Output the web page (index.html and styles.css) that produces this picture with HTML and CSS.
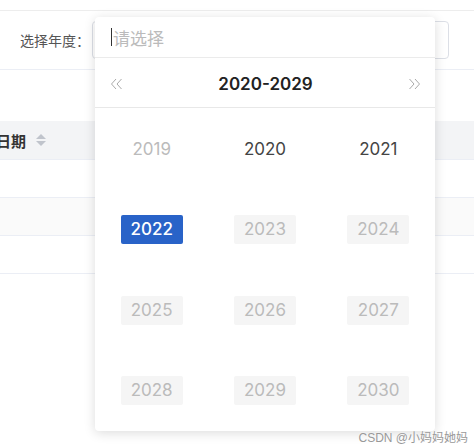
FILE: index.html
```html
<!DOCTYPE html>
<html lang="zh-CN">
<head>
    <meta charset="UTF-8">
    <title>选择年度</title>
    <link rel="stylesheet" href="styles.css">
</head>
<body>
<div id="page">
    <div class="search">
        <label class="search-label">选择年度：</label>
        <div class="search-input"></div>
    </div>

    <div class="table">
        <div class="row head">
            <div class="cell">日期 <span class="sort"><i class="up"></i><i class="down"></i></span></div>
        </div>
        <div class="row"><div class="cell"></div></div>
        <div class="row stripe"><div class="cell"></div></div>
        <div class="row"><div class="cell"></div></div>
    </div>

    <!-- year picker dropdown -->
    <div id="picker">
        <div class="picker-input"><span class="caret"></span><span class="placeholder">请选择</span></div>
        <div class="picker-head">
            <svg class="arrow" width="13" height="12" viewBox="0 0 13 12"><path d="M6 1L1.5 6L6 11M11.5 1L7 6L11.5 11" fill="none" stroke="#aaa" stroke-width="1"/></svg>
            <span class="decade">2020-2029</span>
            <svg class="arrow" width="13" height="12" viewBox="0 0 13 12"><path d="M1.5 1L6 6L1.5 11M7 1L11.5 6L7 11" fill="none" stroke="#aaa" stroke-width="1"/></svg>
        </div>
        <div class="years">
            <div class="year"><span class="out">2019</span></div>
            <div class="year"><span class="on">2020</span></div>
            <div class="year"><span class="on">2021</span></div>
            <div class="year"><span class="sel">2022</span></div>
            <div class="year"><span class="dis">2023</span></div>
            <div class="year"><span class="dis">2024</span></div>
            <div class="year"><span class="dis">2025</span></div>
            <div class="year"><span class="dis">2026</span></div>
            <div class="year"><span class="dis">2027</span></div>
            <div class="year"><span class="dis">2028</span></div>
            <div class="year"><span class="dis">2029</span></div>
            <div class="year"><span class="dis">2030</span></div>
        </div>
    </div>

    <div id="mark">CSDN @小妈妈她妈</div>
</div>
</body>
</html>
```

FILE: styles.css
```css
* {
    box-sizing: border-box;
    margin: 0;
    padding: 0;
}

body {
    font-family: Inter, "Noto Sans CJK SC", sans-serif;
    color: #333;
    background: #fff;
}

#page {
    position: relative;
    width: 474px;
    height: 448px;
    overflow: hidden;
    padding-top: 10px;
}

.search {
    display: flex;
    align-items: center;
    height: 60px;
    padding: 0 25px 0 20px;
    border-top: 1px solid #ededed;
    border-bottom: 1px solid #ebeef5;
}
.search-label {
    font-family: "Noto Sans CJK SC", sans-serif;
    font-size: 14px;
    color: #555;
    width: 72px;
}
.search-input {
    flex: 1;
    height: 38px;
    border: 1px solid #dcdfe6;
    border-radius: 4px;
}

.table {
    margin-top: 51px;
    margin-left: -22px;
}
.row {
    height: 38px;
    border-bottom: 1px solid #ebeef5;
}
.row.head {
    height: 39px;
    background: #f3f4f6;
}
.row.stripe {
    background: #fafafa;
}
.cell {
    display: flex;
    align-items: center;
    height: 100%;
    padding-left: 18px;
    font-family: "Noto Sans CJK SC", sans-serif;
    font-size: 15px;
    font-weight: bold;
    color: #333;
}
.sort {
    display: inline-flex;
    flex-direction: column;
    gap: 2px;
    margin-left: 10px;
}
.sort i {
    width: 0;
    height: 0;
    border-left: 5px solid transparent;
    border-right: 5px solid transparent;
}
.sort .up {
    border-bottom: 5px solid #c0c4cc;
}
.sort .down {
    border-top: 5px solid #c0c4cc;
}

#picker {
    position: absolute;
    left: 95px;
    top: 17px;
    width: 340px;
    height: 414px;
    background: #fff;
    border-radius: 4px;
    box-shadow: 0 2px 12px rgba(0, 0, 0, 0.14);
}
.picker-input {
    display: flex;
    align-items: center;
    height: 41px;
    padding-left: 16px;
    border-bottom: 1px solid #ebebeb;
}
.caret {
    width: 1px;
    height: 18px;
    background: #333;
}
.placeholder {
    font-family: "Noto Sans CJK SC", sans-serif;
    font-size: 17px;
    color: #bbb;
    margin-left: 1px;
}
.picker-head {
    display: flex;
    align-items: center;
    justify-content: space-between;
    height: 50px;
    padding: 2px 14px 0 15px;
    border-bottom: 1px solid #e8e8e8;
}
.decade {
    font-size: 17px;
    font-weight: 600;
    color: #222;
}
.years {
    display: grid;
    grid-template-columns: repeat(3, 1fr);
    grid-auto-rows: 80.5px;
    padding-top: 1px;
}
.year {
    display: flex;
    align-items: center;
    justify-content: center;
}
.year span {
    display: block;
    width: 62px;
    height: 29px;
    line-height: 29px;
    text-align: center;
    font-size: 17px;
    border-radius: 2px;
}
.year .out {
    color: #bbb;
}
.year .on {
    color: #444;
}
.year .dis {
    color: #bbb;
    background: #f5f5f5;
}
.year .sel {
    color: #fff;
    font-weight: 500;
    background: #2963c8;
}

#mark {
    position: absolute;
    right: 6px;
    bottom: 3px;
    font-family: "Liberation Sans", "Noto Sans CJK SC", sans-serif;
    font-size: 12px;
    color: #999;
    text-shadow: 0 0 2px #fff;
}
```
